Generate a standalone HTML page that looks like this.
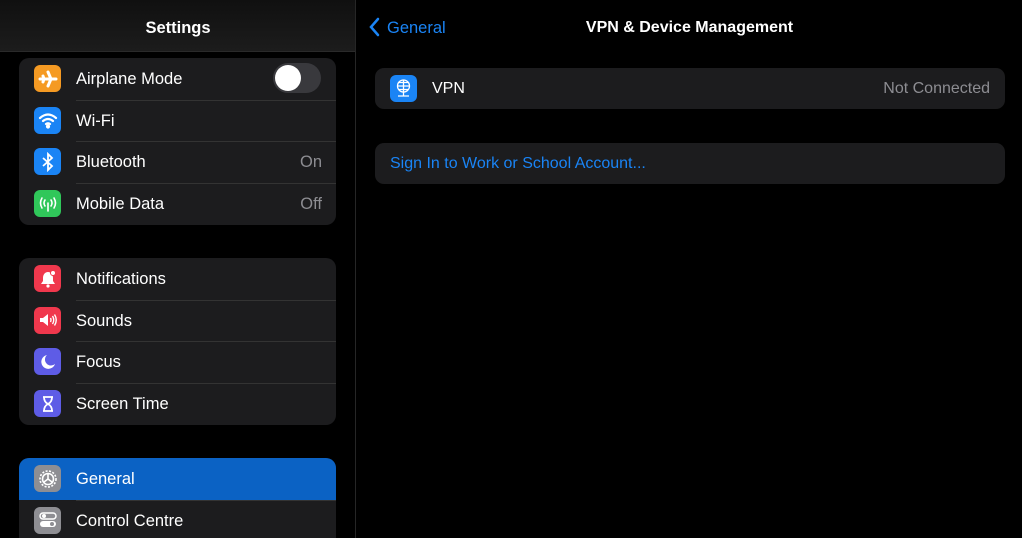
<!DOCTYPE html><html><head><meta charset="utf-8"><style>
*{margin:0;padding:0;box-sizing:border-box}
body{width:1022px;height:538px;background:#000;font-family:"Liberation Sans",Arial,sans-serif;color:#fff;position:relative;overflow:hidden}
.side{position:absolute;left:0;top:0;width:356px;height:538px;background:#000;border-right:1px solid #262626;overflow:hidden}
.hdr{position:absolute;left:0;top:0;width:356px;height:52px;background:linear-gradient(#101010,#1c1c1c);border-bottom:1px solid #2a2a2a;text-align:center;font-size:16.5px;font-weight:bold;line-height:56px}
.grp{position:absolute;left:19px;width:317px;background:#1c1c1e;border-radius:10px;overflow:hidden}
.row{height:41.7px;position:relative;font-size:16.5px;line-height:43px;padding-left:57px}
.row+.row:before{content:"";position:absolute;left:57px;right:0;top:0;height:1px;background:#333}
.ic{position:absolute;left:15px;top:7px;width:27px;height:27px;border-radius:6px;display:flex;align-items:center;justify-content:center}
.val{position:absolute;right:14px;top:0;color:#8d8d92}
.sel{background:#0b62c4}
.card{position:absolute;left:375px;width:630px;height:41px;background:#1c1c1e;border-radius:9px;font-size:16px;line-height:42px}
</style></head><body>
<div class="side">
<div class="hdr">Settings</div>
<div class="grp" style="top:58px">
<div class="row"><div class="ic" style="background:#f59a23"><svg width="20" height="20" viewBox="0 0 20 20"><path d="M2 10h16M10 3l3 7-3 7M5 7l1 3-1 3" stroke="#fff" stroke-width="3" fill="none" stroke-linecap="round"/></svg></div>Airplane Mode
<div style="position:absolute;right:15px;top:5px;width:48px;height:30px;border-radius:15px;background:#39393d"><div style="position:absolute;left:2px;top:2px;width:26px;height:26px;border-radius:13px;background:#fff"></div></div></div>
<div class="row"><div class="ic" style="background:#1a84f5"><svg width="20" height="20" viewBox="0 0 20 20" fill="none" stroke="#fff" stroke-width="2.2" stroke-linecap="round"><path d="M2 8q8-7 16 0M5 11q5-4 10 0M8 14q2-1.5 4 0"/><circle cx="10" cy="16.5" r="1" fill="#fff"/></svg></div>Wi-Fi</div>
<div class="row"><div class="ic" style="background:#1a84f5"><svg width="16" height="20" viewBox="0 0 16 20" fill="none" stroke="#fff" stroke-width="1.8"><path d="M3 6l9 8-4 4V2l4 4-9 8"/></svg></div>Bluetooth<span class="val">On</span></div>
<div class="row"><div class="ic" style="background:#30c75a"><svg width="20" height="20" viewBox="0 0 20 20" fill="none" stroke="#fff" stroke-width="1.6" stroke-linecap="round"><path d="M10 9v8M7 6q-2 3 0 6M13 6q2 3 0 6M4 4q-3 5 0 10M16 4q3 5 0 10"/></svg></div>Mobile Data<span class="val">Off</span></div>
</div>
<div class="grp" style="top:258px">
<div class="row"><div class="ic" style="background:#f0384d"><svg width="20" height="20" viewBox="0 0 20 20" fill="#fff"><path d="M10 3c-3 0-5 2.5-5 6v3l-2 3h14l-2-3V9c0-3.5-2-6-5-6z"/><circle cx="10" cy="17" r="1.6"/><circle cx="15" cy="4" r="2.5" stroke="#f0384d"/></svg></div>Notifications</div>
<div class="row"><div class="ic" style="background:#f0384d"><svg width="20" height="20" viewBox="0 0 20 20"><path d="M2 8h3l5-4v12l-5-4H2z" fill="#fff"/><path d="M12.5 8q1 2 0 4M14.5 6q2.5 4 0 8M16.5 4.5q3.5 5.5 0 11" stroke="#fff" stroke-width="1.4" fill="none"/></svg></div>Sounds</div>
<div class="row"><div class="ic" style="background:#5e5ce6"><svg width="20" height="20" viewBox="0 0 20 20"><path d="M9 3a7 7 0 1 0 8 9 6 6 0 0 1-8-9z" fill="#fff"/></svg></div>Focus</div>
<div class="row"><div class="ic" style="background:#5e5ce6"><svg width="20" height="20" viewBox="0 0 20 20" fill="none" stroke="#fff" stroke-width="1.8"><path d="M5 3h10M5 17h10M6 3q0 5 4 7 4-2 4-7M6 17q0-5 4-7 4 2 4 7"/></svg></div>Screen Time</div>
</div>
<div class="grp" style="top:458px;border-radius:10px 10px 0 0">
<div class="row sel"><div class="ic" style="background:#8e8e93"><svg width="22" height="22" viewBox="0 0 22 22" fill="none" stroke="#fff" stroke-width="1.6"><circle cx="11" cy="11" r="8" stroke-dasharray="2 1.5"/><circle cx="11" cy="11" r="5.5"/><path d="M11 11V6M11 11l4 3M11 11l-4 3"/></svg></div>General</div>
<div class="row"><div class="ic" style="background:#8e8e93"><svg width="18" height="18" viewBox="0 0 18 18"><rect x="1" y="2" width="16" height="6" rx="3" fill="none" stroke="#fff" stroke-width="1.5"/><circle cx="5" cy="5" r="2" fill="#fff"/><rect x="1" y="10" width="16" height="6" rx="3" fill="#fff"/><circle cx="13" cy="13" r="2" fill="#8e8e93"/></svg></div>Control Centre</div>
</div>
</div>
<div style="position:absolute;left:368px;top:17px;color:#1a84f5;font-size:16.5px"><svg width="12" height="20" viewBox="0 0 12 20" style="vertical-align:-4px;margin-right:7px"><path d="M10 2L3 10l7 8" stroke="#1a84f5" stroke-width="2.5" fill="none" stroke-linecap="round"/></svg>General</div>
<div style="position:absolute;left:357px;width:665px;top:19px;text-align:center;font-size:16px;font-weight:bold">VPN &amp; Device Management</div>
<div class="card" style="top:68px"><div style="position:absolute;left:15px;top:7px;width:27px;height:27px;border-radius:6px;background:#1a84f5"><svg width="27" height="27" viewBox="0 0 27 27" fill="none" stroke="#fff" stroke-width="1.3"><circle cx="13.5" cy="11" r="6"/><path d="M7.5 11h12M13.5 5v12M9 7.5h9M9 14.5h9M13.5 17v4M8 21h11"/></svg></div><span style="position:absolute;left:57px">VPN</span><span style="position:absolute;right:15px;color:#8d8d92">Not Connected</span></div>
<div class="card" style="top:143px;color:#1a84f5;padding-left:15px">Sign In to Work or School Account...</div>
</body></html>
